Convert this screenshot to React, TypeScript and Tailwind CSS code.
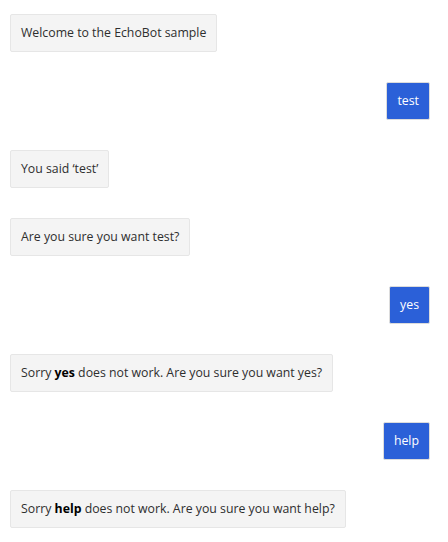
import React from 'react';

type Message = {
  from: 'bot' | 'user';
  text: React.ReactNode;
};

const messages: Message[] = [
  { from: 'bot', text: 'Welcome to the EchoBot sample' },
  { from: 'user', text: 'test' },
  { from: 'bot', text: 'You said \u2018test\u2019' },
  { from: 'bot', text: 'Are you sure you want test?' },
  { from: 'user', text: 'yes' },
  {
    from: 'bot',
    text: (
      <>
        Sorry <strong className="font-bold text-black">yes</strong> does not work. Are you sure you want yes?
      </>
    ),
  },
  { from: 'user', text: 'help' },
  {
    from: 'bot',
    text: (
      <>
        Sorry <strong className="font-bold text-black">help</strong> does not work. Are you sure you want help?
      </>
    ),
  },
];

export default function App() {
  return (
    <div className="min-h-screen bg-white pt-[14px] pl-[10px] pr-[18px] font-['Open_Sans',sans-serif] text-[12.3px] leading-[18px] text-[#2e2e2e]">
      <div className="flex flex-col gap-[30px]">
        {messages.map((m, i) =>
          m.from === 'bot' ? (
            <div key={i} className="flex justify-start">
              <div className="rounded-[2px] border border-[#e6e6e6] bg-[#f4f4f4] px-[10px] py-[9px]">
                {m.text}
              </div>
            </div>
          ) : (
            <div key={i} className="flex justify-end">
              <div className="rounded-[2px] border border-[#dcdcdc] bg-[#2b60d8] px-[10px] py-[9px] text-white">
                {m.text}
              </div>
            </div>
          )
        )}
      </div>
    </div>
  );
}
